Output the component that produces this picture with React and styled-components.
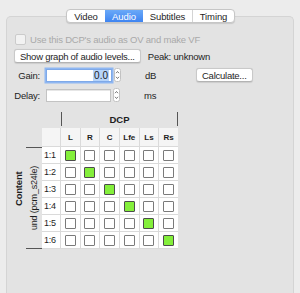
import styled, { createGlobalStyle } from 'styled-components';

const GlobalStyle = createGlobalStyle`
  html, body {
    margin: 0;
    padding: 0;
    background: #ececec;
    overflow: hidden;
  }
  body {
    font-family: 'Liberation Sans', Arial, sans-serif;
    font-size: 9.5px;
    color: #1e1e1e;
  }
`;

const Window = styled.div`
  width: 300px;
  height: 293px;
  padding-top: 9px;
  box-sizing: border-box;
  display: flex;
  flex-direction: column;
`;

const TabBar = styled.div`
  display: flex;
  align-self: center;
  height: 14px;
  margin-left: 1px;
  background: #fff;
  border: 1px solid #c6c6c6;
  border-radius: 4px;
  box-shadow: 0 1px 1px rgba(0, 0, 0, 0.12);
  position: relative;
  z-index: 1;
  overflow: hidden;
  box-sizing: border-box;
`;

const Tab = styled.div`
  width: ${(p) => p.w}px;
  display: flex;
  align-items: center;
  justify-content: center;
  font-size: 9.5px;
  letter-spacing: -0.1px;
  color: ${(p) => (p.active ? '#fff' : '#1e1e1e')};
  background: ${(p) => (p.active ? 'linear-gradient(#6aa9f8, #3e84f1)' : 'transparent')};
  border-left: ${(p) => (p.first || p.active ? 'none' : '1px solid #d4d4d4')};
  box-sizing: border-box;
`;

const Panel = styled.div`
  margin: -7px 6px 0;
  flex: 1;
  background: #e3e3e3;
  border: 1px solid #d4d4d4;
  border-bottom: none;
  border-radius: 5px 5px 0 0;
  padding: 16px 7px 0;
  display: flex;
  flex-direction: column;
`;

const CheckRow = styled.div`
  display: flex;
  align-items: center;
  height: 12px;
  gap: 4px;
  padding-left: 1px;
  color: #a9a9a9;
  letter-spacing: -0.2px;
`;

const DisabledBox = styled.div`
  width: 9px;
  height: 9px;
  border: 1px solid #cbcbcb;
  border-radius: 2px;
  background: #f2f2f2;
`;

const Row = styled.div`
  display: flex;
  align-items: center;
  height: ${(p) => p.h || 14}px;
  margin-top: ${(p) => p.mt || 0}px;
`;

const PushButton = styled.div`
  height: 12px;
  padding: 0 5px;
  display: flex;
  align-items: center;
  background: #fff;
  border: 1px solid #c9c9c9;
  border-bottom-color: #b3b3b3;
  border-radius: 3px;
  box-shadow: 0 0.5px 1px rgba(0, 0, 0, 0.1);
  letter-spacing: -0.25px;
  white-space: nowrap;
  margin-left: ${(p) => p.ml || 0}px;
`;

const Note = styled.span`
  margin-left: ${(p) => p.ml || 0}px;
  width: ${(p) => (p.w ? `${p.w}px` : 'auto')};
  letter-spacing: -0.2px;
  white-space: nowrap;
`;

const FieldLabel = styled.span`
  width: 26px;
  text-align: right;
  letter-spacing: -0.2px;
`;

const TextField = styled.div`
  width: ${(p) => p.w}px;
  height: 13px;
  margin-left: 6px;
  background: #fff;
  border: 1px solid ${(p) => (p.focused ? '#7fa9e8' : '#c3c3c3')};
  box-shadow: ${(p) => (p.focused ? '0 0 0 1.5px #8fb7f2' : 'inset 0 1px 0 #e6e6e6')};
  box-sizing: border-box;
  display: flex;
  align-items: center;
  justify-content: flex-end;
  padding-right: 2px;
  font-size: 10px;
`;

const Selected = styled.span`
  background: #b7d5fb;
  padding: 0 1px;
`;

const StepperBox = styled.svg`
  margin-left: 2px;
  flex-shrink: 0;
`;

const Stepper = () => (
  <StepperBox width="7" height="14" viewBox="0 0 7 14">
    <rect x="0.5" y="0.5" width="6" height="13" rx="2" fill="#fff" stroke="#c2c2c2" />
    <path d="M2 5.2 L3.5 3.5 L5 5.2" fill="none" stroke="#555" strokeWidth="0.8" />
    <path d="M2 8.8 L3.5 10.5 L5 8.8" fill="none" stroke="#555" strokeWidth="0.8" />
  </StepperBox>
);

const Matrix = styled.div`
  display: grid;
  grid-template-columns: 16px 16px 136px;
  grid-template-rows: 16px 19px 102px;
  margin: 10px 0 0 -4px;
`;

const DcpTitle = styled.div`
  grid-column: 3;
  grid-row: 1;
  margin-left: 19px;
  height: 14px;
  border-left: 1px solid #555;
  border-right: 1px solid #555;
  display: flex;
  align-items: center;
  justify-content: center;
  font-weight: bold;
  font-size: 9.5px;
`;

const SideTitle = styled.div`
  grid-column: 1;
  grid-row: 2 / 4;
  writing-mode: vertical-rl;
  transform: rotate(180deg);
  display: flex;
  align-items: center;
  justify-content: center;
  font-weight: bold;
  font-size: 9.5px;
  letter-spacing: -0.2px;
`;

const SourceLabel = styled.div`
  grid-column: 2;
  grid-row: 3;
  border-top: 1px solid #555;
  border-bottom: 1px solid #555;
  display: flex;
  align-items: center;
  justify-content: center;
  writing-mode: vertical-rl;
  transform: rotate(180deg);
  font-size: 9px;
  letter-spacing: -0.2px;
  white-space: nowrap;
`;

const Table = styled.div`
  grid-column: 3;
  grid-row: 2 / 4;
  display: grid;
  grid-template-columns: 18px repeat(6, 1fr);
  grid-template-rows: 18px repeat(6, 16px);
  gap: 1px;
  background: #dadada;
  padding-bottom: 1px;
  align-self: start;
`;

const HeadCell = styled.div`
  background: #f5f5f5;
  display: flex;
  align-items: center;
  justify-content: center;
  font-weight: bold;
  font-size: 8px;
`;

const RowLabel = styled.div`
  background: #fff;
  display: flex;
  align-items: center;
  padding-left: 2px;
  font-size: 9px;
  letter-spacing: -0.2px;
`;

const Cell = styled.div`
  background: #fff;
  display: flex;
  align-items: center;
  justify-content: center;
`;

const Box = styled.div`
  width: 11px;
  height: 11px;
  box-sizing: border-box;
  border: 1.5px solid ${(p) => (p.on ? '#4b4b4b' : '#7a7a7a')};
  background: ${(p) => (p.on ? '#84ef3b' : '#fff')};
  border-radius: 1px;
`;

const channels = ['L', 'R', 'C', 'Lfe', 'Ls', 'Rs'];
const tabs = [
  { name: 'Video', w: 38 },
  { name: 'Audio', w: 38, active: true },
  { name: 'Subtitles', w: 49 },
  { name: 'Timing', w: 42 },
];

export default function App() {
  return (
    <>
      <GlobalStyle />
      <Window>
        <TabBar>
          {tabs.map((t, i) => (
            <Tab key={t.name} w={t.w} active={t.active} first={i === 0 || tabs[i - 1].active}>
              {t.name}
            </Tab>
          ))}
        </TabBar>
        <Panel>
          <CheckRow>
            <DisabledBox />
            <span>Use this DCP's audio as OV and make VF</span>
          </CheckRow>
          <Row h={12} mt={5}>
            <PushButton>Show graph of audio levels...</PushButton>
            <Note ml={7}>Peak: unknown</Note>
          </Row>
          <Row mt={6}>
            <FieldLabel>Gain:</FieldLabel>
            <TextField w={66} focused>
              <Selected>0.0</Selected>
            </TextField>
            <Stepper />
            <Note ml={24} w={51}>dB</Note>
            <PushButton>Calculate...</PushButton>
          </Row>
          <Row mt={6}>
            <FieldLabel>Delay:</FieldLabel>
            <TextField w={65} />
            <Stepper />
            <Note ml={24}>ms</Note>
          </Row>
          <Matrix>
            <DcpTitle>DCP</DcpTitle>
            <SideTitle>Content</SideTitle>
            <SourceLabel>und (pcm_s24le)</SourceLabel>
            <Table>
              <HeadCell />
              {channels.map((c) => (
                <HeadCell key={c}>{c}</HeadCell>
              ))}
              {channels.map((_, r) => [
                <RowLabel key={`l${r}`}>1:{r + 1}</RowLabel>,
                ...channels.map((c, col) => (
                  <Cell key={`${r}-${c}`}>
                    <Box on={r === col} />
                  </Cell>
                )),
              ])}
            </Table>
          </Matrix>
        </Panel>
      </Window>
    </>
  );
}
